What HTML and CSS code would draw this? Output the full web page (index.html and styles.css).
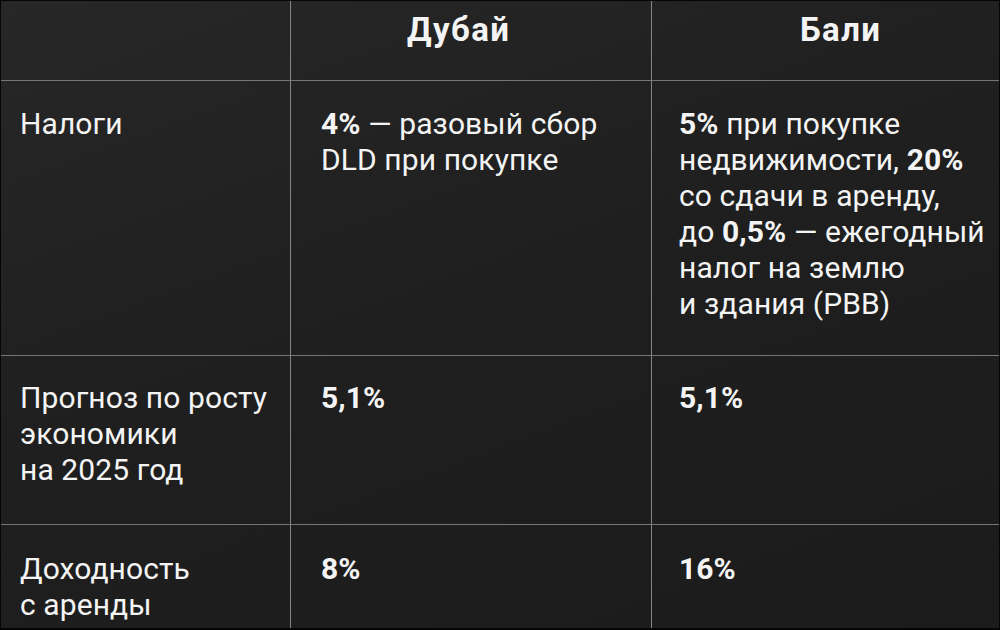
FILE: index.html
```html
<!DOCTYPE html>
<html lang="ru">
<head>
<meta charset="utf-8">
<title>Дубай и Бали</title>
<link rel="stylesheet" href="styles.css">
</head>
<body>
<div class="table">
  <div class="cell head first"></div>
  <div class="cell head c2"><span class="h h-dubai">Дубай</span></div>
  <div class="cell head c3"><span class="h h-bali">Бали</span></div>

  <div class="cell row r1 label">Налоги</div>
  <div class="cell row r1 c2 val"><b>4%</b> — разовый сбор<br>DLD при покупке</div>
  <div class="cell row r1 c3 val"><b>5%</b> при покупке<br>недвижимости, <b>20%</b><br>со сдачи в аренду,<br>до <b>0,5%</b> — ежегодный<br>налог на землю<br>и здания (PBB)</div>

  <div class="cell row r2 label">Прогноз по росту<br>экономики<br>на 2025 год</div>
  <div class="cell row r2 c2 val"><b>5,1%</b></div>
  <div class="cell row r2 c3 val"><b>5,1%</b></div>

  <div class="cell row r3 label">Доходность<br>с аренды</div>
  <div class="cell row r3 c2 val"><b>8%</b></div>
  <div class="cell row r3 c3 val"><b>16%</b></div>
</div>
</body>
</html>
```

FILE: styles.css
```css
* { box-sizing: border-box; }
html, body { margin: 0; padding: 0; background: #000; }
body {
  width: 1000px;
  height: 630px;
  overflow: hidden;
  font-family: Roboto, "Noto Sans", "DejaVu Sans", sans-serif;
  color: #f4f4f4;
}
.table {
  width: 1000px;
  height: 630px;
  border: 1px solid #050505;
  border-bottom-width: 2px;
  background: linear-gradient(160deg, #272727 0%, #1f1f1f 45%, #1b1b1b 100%);
  display: grid;
  grid-template-columns: 289px 361px 1fr;
  grid-template-rows: 79px 275px 169px 1fr;
}
.cell {
  white-space: nowrap;
  font-size: 30px;
  line-height: 36px;
  letter-spacing: 0.1px;
}
.c2, .c3 { border-left: 1px solid #858585; }
.row { border-top: 1px solid #767676; }
.head { display: flex; align-items: flex-start; }
.h {
  font-weight: 700;
  font-size: 33px;
  line-height: 40px;
  letter-spacing: 1.4px;
  padding-top: 9px;
}
.h-dubai { padding-left: 116px; }
.h-bali { padding-left: 148px; }
.label { padding: 25px 0 0 19px; }
.val { padding: 25px 0 0 30px; }
.c3.val { padding-left: 27px; }
.r2 { padding-top: 24px; }
.r3 { padding-top: 26px; }
b { font-weight: 700; }
```
